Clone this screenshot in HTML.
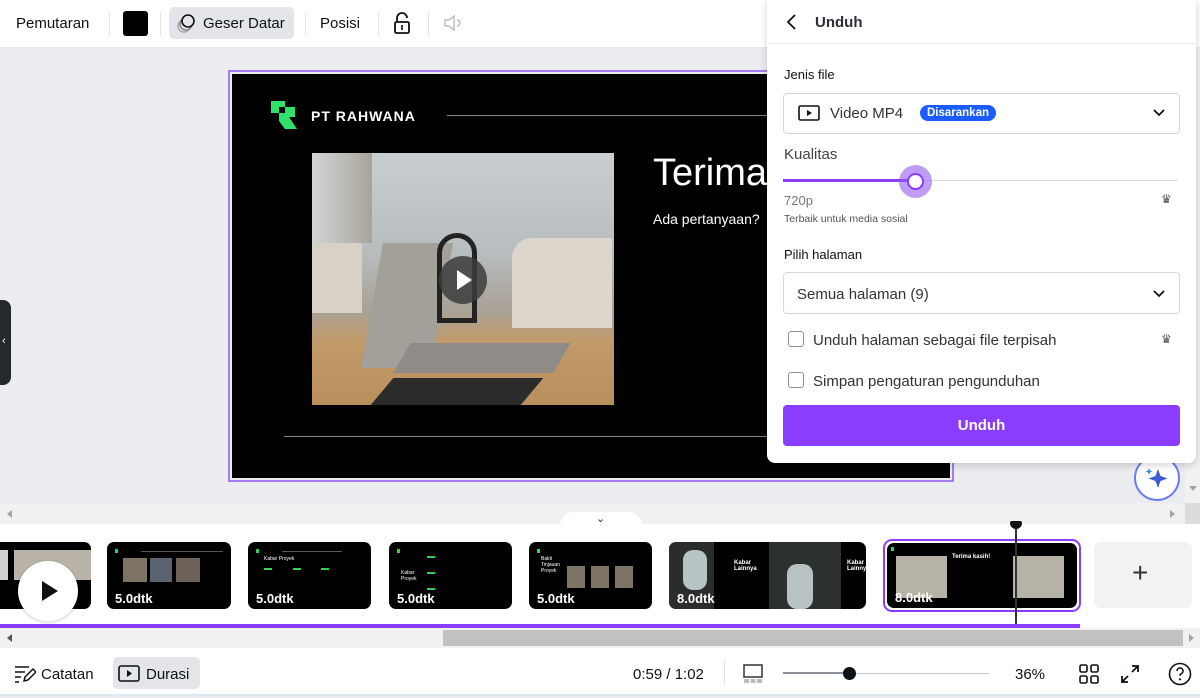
<!DOCTYPE html>
<html><head><meta charset="utf-8"><style>
*{box-sizing:border-box;margin:0;padding:0}
body{width:1200px;height:698px;overflow:hidden;position:relative;background:#ebecf0;font-family:"Liberation Sans",sans-serif;color:#0d1216}
.abs{position:absolute}
.top{left:0;top:0;width:1200px;height:48px;background:#fff;border-bottom:1px solid #e3e5e8}
.tb{font-size:15px;color:#0d1216;top:15px}
.sep{top:12px;width:1px;height:24px;background:#e3e5e8}
.thumb{top:542px;height:67px;background:#000;border-radius:7px;overflow:hidden}
.thumb .d{position:absolute;left:8px;bottom:3px;color:#fff;font-weight:bold;font-size:13px}
.mini{position:absolute;background:#7d7466}
.gl{position:absolute;height:2px;background:#2fd35a}
.tl{position:absolute;height:1px;background:#555}
.lbl{font-size:13px;color:#0d1216}
.box{border:1px solid #d5d7db;border-radius:4px;background:#fff}
.cb{width:16px;height:16px;border:1.5px solid #8a8f96;border-radius:3px}
</style></head><body>

<div class="abs top"></div>
<div class="abs tb" style="left:16px">Pemutaran</div>
<div class="abs sep" style="left:109px"></div>
<div class="abs" style="left:123px;top:11px;width:25px;height:25px;background:#000;border-radius:3px"></div>
<div class="abs sep" style="left:160px"></div>
<div class="abs" style="left:169px;top:7px;width:125px;height:32px;background:#e3e5e8;border-radius:5px"></div>
<svg class="abs" style="left:175px;top:12px" width="24" height="24" viewBox="0 0 24 24"><circle cx="9" cy="14" r="6" fill="none" stroke="#aaa" stroke-width="1.5"/><circle cx="11" cy="12" r="6" fill="none" stroke="#888" stroke-width="1.5"/><circle cx="13" cy="9" r="6" fill="#e3e5e8" stroke="#0d1216" stroke-width="1.6"/></svg>
<div class="abs tb" style="left:203px">Geser Datar</div>
<div class="abs sep" style="left:305px"></div>
<div class="abs tb" style="left:320px">Posisi</div>
<div class="abs sep" style="left:378px"></div>
<svg class="abs" style="left:392px;top:11px" width="20" height="24" viewBox="0 0 20 24"><path d="M5 11V7a5 5 0 0 1 10 0" fill="none" stroke="#0d1216" stroke-width="1.8"/><rect x="3" y="11" width="14" height="11" rx="1.5" fill="none" stroke="#0d1216" stroke-width="1.8"/><rect x="9.2" y="14" width="1.6" height="5" fill="#0d1216"/></svg>
<div class="abs sep" style="left:428px"></div>
<svg class="abs" style="left:443px;top:13px" width="22" height="20" viewBox="0 0 22 20"><path d="M2 7h4l5-4v14l-5-4H2z" fill="none" stroke="#b8bcc2" stroke-width="1.4"/><path d="M14 7a3 3 0 0 1 0 6" fill="none" stroke="#b8bcc2" stroke-width="1.4"/></svg>

<div class="abs" style="left:0;top:300px;width:11px;height:85px;background:#25282c;border-radius:0 8px 8px 0"></div>
<div class="abs" style="left:2px;top:335px;color:#fff;font-size:11px">‹</div>

<div class="abs" style="left:228px;top:70px;width:726px;height:412px;border:2px solid #a57cf0"></div>
<div class="abs" style="left:232px;top:74px;width:718px;height:404px;background:#000;overflow:hidden">
  <svg class="abs" style="left:39px;top:27px" width="28" height="30" viewBox="0 0 28 30"><path d="M0 0h14v6h10v10h-6l8 12H14l-6-8V12H0z" fill="#2fe36a"/><path d="M8 6h6v6H8z" fill="#000"/></svg>
  <div class="abs" style="left:79px;top:34px;color:#fff;font-size:14px;font-weight:bold;letter-spacing:1px">PT RAHWANA</div>
  <div class="abs" style="left:215px;top:41px;width:520px;height:1px;background:#888"></div>
  <div class="abs" style="left:80px;top:79px;width:302px;height:252px;overflow:hidden;background:linear-gradient(180deg,#c9ced0 0%,#b7bcbe 40%,#a8a297 62%,#c19a6a 75%,#b98f5c 100%)">
    <div class="abs" style="left:0;top:0;width:60px;height:90px;background:linear-gradient(90deg,#d3d6d6,#a9a49a)"></div>
    <div class="abs" style="left:200px;top:85px;width:100px;height:90px;background:#dcd6cc;border-radius:20px 0 0 0"></div>
    <div class="abs" style="left:0;top:90px;width:50px;height:70px;background:#d8d1c6"></div>
    <div class="abs" style="left:60px;top:90px;width:70px;height:125px;background:#a39f99;transform:skewX(-10deg)"></div>
    <div class="abs" style="left:90px;top:190px;width:160px;height:30px;background:#8f8c88;transform:skewX(-30deg)"></div>
    <div class="abs" style="left:70px;top:225px;width:150px;height:27px;background:#2b2b2b;transform:skewX(-40deg)"></div>
    <div class="abs" style="left:125px;top:80px;width:40px;height:90px;border:5px solid #222;border-radius:20px 20px 0 0"></div>
    <div class="abs" style="left:127px;top:103px;width:48px;height:48px;border-radius:50%;background:rgba(60,60,60,.85)"></div>
    <svg class="abs" style="left:143px;top:116px" width="18" height="22"><path d="M2 1l15 10L2 21z" fill="#fff"/></svg>
  </div>
  <div class="abs" style="left:421px;top:78px;color:#fff;font-size:38px">Terima</div>
  <div class="abs" style="left:421px;top:137px;color:#fff;font-size:14px">Ada pertanyaan?</div>
  <div class="abs" style="left:52px;top:362px;width:680px;height:1px;background:#888"></div>
</div>

<div class="abs" style="left:1185px;top:48px;width:15px;height:455px;background:#f1f1f1"></div>
<div class="abs" style="left:1189px;top:486px;width:0;height:0;border-left:4px solid transparent;border-right:4px solid transparent;border-top:5px solid #a3a3a3"></div>

<div class="abs" style="left:1134px;top:455px;width:46px;height:46px;border-radius:50%;background:#fff;border:2px solid #6b7cf5"></div>
<svg class="abs" style="left:1144px;top:465px" width="26" height="26" viewBox="0 0 26 26"><path d="M14 4l2.5 7 7 2.5-7 2.5-2.5 7-2.5-7-7-2.5 7-2.5z" fill="#3b5bdb"/><path d="M5 3l1 2.5 2.5 1-2.5 1L5 10 4 7.5 1.5 6.5 4 5.5z" fill="#3b8bdb"/></svg>

<div class="abs" style="left:0;top:503px;width:1200px;height:21px;background:#f1f1f1"></div>
<div class="abs" style="left:7px;top:510px;border-top:4px solid transparent;border-bottom:4px solid transparent;border-right:5px solid #a3a3a3"></div>
<div class="abs" style="left:1170px;top:510px;border-top:4px solid transparent;border-bottom:4px solid transparent;border-left:5px solid #a3a3a3"></div>
<div class="abs" style="left:1185px;top:503px;width:15px;height:21px;background:#dcdcdc"></div>

<div class="abs" style="left:0;top:524px;width:1200px;height:104px;background:#fff"></div>
<div class="abs" style="left:560px;top:512px;width:82px;height:14px;background:#fff;border-radius:14px 14px 0 0"></div>
<div class="abs" style="left:596px;top:512px;font-size:11px;color:#333">⌄</div>

<div class="abs thumb" style="left:-20px;width:111px"><div class="mini" style="left:0;top:8px;width:28px;height:30px;background:#cfd2d1"></div><div class="mini" style="left:34px;top:8px;width:77px;height:30px;background:#b9b3a8"></div></div>
<div class="abs" style="left:18px;top:561px;width:60px;height:60px;border-radius:50%;background:#fff;box-shadow:0 1px 4px rgba(0,0,0,.2)"></div>
<svg class="abs" style="left:41px;top:580px" width="18" height="22"><path d="M1 1l16 10L1 21z" fill="#0d1216"/></svg>

<div class="abs thumb" style="left:107px;width:124px"><div class="gl" style="left:8px;top:7px;width:3px;height:4px"></div><div class="tl" style="left:34px;top:9px;width:82px"></div><div class="mini" style="left:16px;top:16px;width:24px;height:24px"></div><div class="mini" style="left:43px;top:16px;width:22px;height:24px;background:#5a6470"></div><div class="mini" style="left:69px;top:16px;width:24px;height:24px;background:#6e625a"></div><div class="d">5.0dtk</div></div>
<div class="abs thumb" style="left:248px;width:123px"><div class="gl" style="left:8px;top:7px;width:3px;height:4px"></div><div class="tl" style="left:34px;top:9px;width:60px"></div><div class="abs" style="left:16px;top:14px;color:#fff;font-size:5px">Kabar Proyek</div><div class="gl" style="left:16px;top:26px;width:8px"></div><div class="gl" style="left:45px;top:26px;width:8px"></div><div class="gl" style="left:73px;top:26px;width:8px"></div><div class="d">5.0dtk</div></div>
<div class="abs thumb" style="left:389px;width:123px"><div class="gl" style="left:8px;top:7px;width:3px;height:4px"></div><div class="abs" style="left:12px;top:28px;color:#fff;font-size:5px">Kabar<br>Proyek</div><div class="gl" style="left:38px;top:14px;width:8px"></div><div class="gl" style="left:38px;top:30px;width:8px"></div><div class="gl" style="left:38px;top:46px;width:8px"></div><div class="d">5.0dtk</div></div>
<div class="abs thumb" style="left:529px;width:123px"><div class="gl" style="left:8px;top:7px;width:3px;height:4px"></div><div class="abs" style="left:12px;top:14px;color:#fff;font-size:5px">Bakti<br>Tinjauan<br>Proyek</div><div class="mini" style="left:38px;top:24px;width:18px;height:22px"></div><div class="mini" style="left:62px;top:24px;width:18px;height:22px"></div><div class="mini" style="left:86px;top:24px;width:18px;height:22px"></div><div class="d">5.0dtk</div></div>
<div class="abs thumb" style="left:669px;width:197px"><div class="mini" style="left:0;top:0;width:45px;height:67px;background:#2a2d2c"></div><div class="mini" style="left:14px;top:8px;width:24px;height:40px;background:#b8c4c4;border-radius:10px"></div><div class="abs" style="left:65px;top:18px;color:#fff;font-size:6px;font-weight:bold">Kabar<br>Lainnya</div><div class="mini" style="left:100px;top:0;width:72px;height:67px;background:#2c302f"></div><div class="mini" style="left:118px;top:22px;width:26px;height:45px;background:#b8c4c4;border-radius:10px"></div><div class="abs" style="left:178px;top:18px;color:#fff;font-size:6px;font-weight:bold">Kabar<br>Lainnya</div><div class="d">8.0dtk</div></div>
<div class="abs" style="left:883px;top:539px;width:198px;height:73px;border:2px solid #8b3dff;border-radius:9px"></div>
<div class="abs thumb" style="left:887px;top:543px;width:190px;height:65px"><div class="gl" style="left:4px;top:4px;width:3px;height:4px"></div><div class="mini" style="left:9px;top:13px;width:51px;height:42px;background:#b7b2a6"></div><div class="abs" style="left:65px;top:11px;color:#fff;font-size:6px;font-weight:bold">Terima kasih!</div><div class="mini" style="left:126px;top:13px;width:51px;height:42px;background:#b7b2a6"></div><div class="d">8.0dtk</div></div>
<div class="abs" style="left:1015px;top:526px;width:2px;height:102px;background:#333"></div>
<div class="abs" style="left:1010px;top:521px;width:12px;height:8px;background:#111;border-radius:2px 2px 6px 6px"></div>
<div class="abs" style="left:1094px;top:542px;width:98px;height:66px;background:#f1f2f4;border-radius:7px"></div>
<div class="abs" style="left:1132px;top:557px;font-size:28px;font-weight:300;color:#333">+</div>

<div class="abs" style="left:0;top:624px;width:1080px;height:4px;background:#8b3dff"></div>
<div class="abs" style="left:0;top:628px;width:1200px;height:20px;background:#f1f1f1"></div>
<div class="abs" style="left:443px;top:630px;width:740px;height:16px;background:#c1c1c1"></div>
<div class="abs" style="left:7px;top:634px;border-top:4px solid transparent;border-bottom:4px solid transparent;border-right:5px solid #555"></div>
<div class="abs" style="left:1189px;top:634px;border-top:4px solid transparent;border-bottom:4px solid transparent;border-left:5px solid #a3a3a3"></div>

<div class="abs" style="left:0;top:648px;width:1200px;height:48px;background:#fff;border-bottom:2px solid #dfe8ee"></div>
<svg class="abs" style="left:14px;top:664px" width="22" height="20" viewBox="0 0 22 20"><path d="M1 3h14M1 8h10M1 13h6M1 18h4" stroke="#0d1216" stroke-width="1.6"/><path d="M10 17l1-4 8-8 3 3-8 8z" fill="none" stroke="#0d1216" stroke-width="1.5"/></svg>
<div class="abs" style="left:41px;top:666px;font-size:15px">Catatan</div>
<div class="abs" style="left:113px;top:657px;width:87px;height:32px;background:#e3e5e8;border-radius:5px"></div>
<svg class="abs" style="left:118px;top:665px" width="22" height="17"><rect x="1" y="1" width="20" height="15" rx="2" fill="none" stroke="#0d1216" stroke-width="1.6"/><path d="M9 5l5 3.5L9 12z" fill="#0d1216"/></svg>
<div class="abs" style="left:146px;top:666px;font-size:15px">Durasi</div>
<div class="abs" style="left:633px;top:666px;font-size:15px">0:59 / 1:02</div>
<div class="abs" style="left:724px;top:660px;width:1px;height:26px;background:#e3e5e8"></div>
<svg class="abs" style="left:743px;top:664px" width="20" height="20"><rect x="1" y="1" width="18" height="12" fill="none" stroke="#333" stroke-width="1.5"/><rect x="1" y="15" width="5" height="4" fill="#bbb"/><rect x="7.5" y="15" width="5" height="4" fill="#bbb"/><rect x="14" y="15" width="5" height="4" fill="#bbb"/></svg>
<div class="abs" style="left:783px;top:673px;width:206px;height:1px;background:#c7cbd0"></div>
<div class="abs" style="left:783px;top:672px;width:66px;height:2px;background:#8b9299"></div>
<div class="abs" style="left:843px;top:667px;width:13px;height:13px;border-radius:50%;background:#0d1216"></div>
<div class="abs" style="left:1015px;top:666px;font-size:15px">36%</div>
<svg class="abs" style="left:1079px;top:664px" width="20" height="20"><g fill="none" stroke="#0d1216" stroke-width="1.6"><rect x="1" y="1" width="7" height="7" rx="1.5"/><rect x="12" y="1" width="7" height="7" rx="1.5"/><rect x="1" y="12" width="7" height="7" rx="1.5"/><rect x="12" y="12" width="7" height="7" rx="1.5"/></g></svg>
<svg class="abs" style="left:1120px;top:664px" width="20" height="20"><g fill="none" stroke="#0d1216" stroke-width="1.8"><path d="M12 2h6v6M18 2l-6 6M8 18H2v-6M2 18l6-6"/></g></svg>
<svg class="abs" style="left:1168px;top:662px" width="24" height="24"><circle cx="12" cy="12" r="10.5" fill="none" stroke="#0d1216" stroke-width="1.6"/><path d="M9 9a3 3 0 1 1 4 2.8c-.8.4-1 1-1 2" fill="none" stroke="#0d1216" stroke-width="1.6"/><circle cx="12" cy="17.3" r="1.1" fill="#0d1216"/></svg>

<div class="abs" style="left:767px;top:0;width:429px;height:463px;background:#fff;border-radius:0 0 8px 8px;box-shadow:0 2px 8px rgba(0,0,0,.18)"></div>
<div class="abs" style="left:768px;top:43px;width:427px;height:1px;background:#eceef0"></div>
<svg class="abs" style="left:784px;top:13px" width="14" height="18"><path d="M11 2L4 9l7 7" fill="none" stroke="#0d1216" stroke-width="1.8"/></svg>
<div class="abs" style="left:815px;top:14px;font-size:15px;font-weight:bold;color:#2a2f35">Unduh</div>
<div class="abs lbl" style="left:784px;top:67px">Jenis file</div>
<div class="abs box" style="left:783px;top:93px;width:397px;height:41px"></div>
<svg class="abs" style="left:798px;top:105px" width="22" height="16"><rect x="1" y="1" width="20" height="14" rx="1.5" fill="none" stroke="#0d1216" stroke-width="1.6"/><path d="M9 5l5 3-5 3z" fill="#0d1216"/></svg>
<div class="abs" style="left:830px;top:105px;font-size:15px;color:#333">Video MP4</div>
<div class="abs" style="left:920px;top:105px;height:16px;padding:0 7px;background:#1a5cff;color:#fff;font-size:11.5px;font-weight:bold;line-height:16px;border-radius:8px">Disarankan</div>
<svg class="abs" style="left:1152px;top:108px" width="14" height="10"><path d="M2 2l5 5 5-5" fill="none" stroke="#0d1216" stroke-width="1.8"/></svg>
<div class="abs" style="left:784px;top:146px;font-size:15px;color:#444">Kualitas</div>
<div class="abs" style="left:783px;top:180px;width:395px;height:1px;background:#dcdfe3"></div>
<div class="abs" style="left:783px;top:179px;width:132px;height:3px;background:#8b3dff"></div>
<div class="abs" style="left:899px;top:165px;width:33px;height:33px;border-radius:50%;background:rgba(150,90,240,.6)"></div>
<div class="abs" style="left:907px;top:173px;width:17px;height:17px;border-radius:50%;background:#fff;border:2px solid #8b3dff"></div>
<div class="abs" style="left:784px;top:193px;font-size:13px;color:#777">720p</div>
<div class="abs" style="left:1161px;top:192px;font-size:12px;color:#555">♛</div>
<div class="abs" style="left:784px;top:213px;font-size:10.5px;color:#555">Terbaik untuk media sosial</div>
<div class="abs lbl" style="left:784px;top:247px">Pilih halaman</div>
<div class="abs box" style="left:783px;top:272px;width:397px;height:42px"></div>
<div class="abs" style="left:797px;top:286px;font-size:15px;color:#333">Semua halaman (9)</div>
<svg class="abs" style="left:1152px;top:289px" width="14" height="10"><path d="M2 2l5 5 5-5" fill="none" stroke="#0d1216" stroke-width="1.8"/></svg>
<div class="abs cb" style="left:788px;top:331px"></div>
<div class="abs" style="left:813px;top:332px;font-size:15px;color:#333">Unduh halaman sebagai file terpisah</div>
<div class="abs" style="left:1161px;top:332px;font-size:12px;color:#555">♛</div>
<div class="abs cb" style="left:788px;top:372px"></div>
<div class="abs" style="left:813px;top:373px;font-size:15px;color:#333">Simpan pengaturan pengunduhan</div>
<div class="abs" style="left:783px;top:405px;width:397px;height:41px;background:#8b3dff;border-radius:4px;color:#fff;font-weight:bold;font-size:15px;text-align:center;line-height:42px">Unduh</div>
</body></html>
